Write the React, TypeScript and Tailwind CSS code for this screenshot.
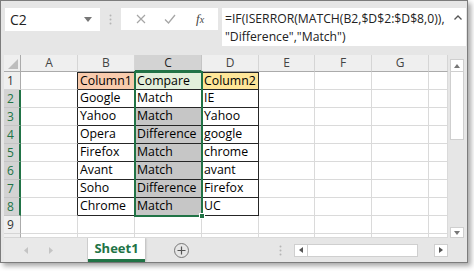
import React from 'react';

const cols = ['A', 'B', 'C', 'D', 'E', 'F', 'G', ''];

const data: string[][] = [
    ['Column1', 'Compare', 'Column2'],
    ['Google', 'Match', 'IE'],
    ['Yahoo', 'Match', 'Yahoo'],
    ['Opera', 'Difference', 'google'],
    ['Firefox', 'Match', 'chrome'],
    ['Avant', 'Match', 'avant'],
    ['Soho', 'Difference', 'Firefox'],
    ['Chrome', 'Match', 'UC'],
];

const cellFont = { fontFamily: '"Open Sans", "Noto Sans", sans-serif' };

function HeaderCell({ label, selected }: { label: string; selected?: boolean }) {
    return (
        <div
            className={
                selected
                    ? 'flex items-center justify-center bg-[#d3d3d3] border-r border-r-[#c4c4c4] border-b-2 border-b-[#217346] text-[12px] text-[#222]'
                    : 'flex items-center justify-center bg-[#efefef] border-r border-r-[#d5d5d5] border-b border-b-[#ababab] text-[12px] text-[#444]'
            }
        >
            {label}
        </div>
    );
}

function RowHeader({ n, selected }: { n: number | string; selected?: boolean }) {
    return (
        <div
            className={
                selected
                    ? 'flex items-center pl-[3px] bg-[#d3d3d3] border-r-2 border-r-[#217346] border-b border-b-[#c4c4c4] text-[12px] text-[#217346]'
                    : 'flex items-center pl-[3px] bg-[#efefef] border-r border-r-[#ababab] border-b border-b-[#d5d5d5] text-[12px] text-[#333]'
            }
        >
            {n}
        </div>
    );
}

function Cell({ text, className }: { text?: string; className: string }) {
    return (
        <div className={'flex items-center pl-[2px] overflow-hidden whitespace-nowrap text-[12.3px] text-black ' + className}>
            {text}
        </div>
    );
}

function cellClass(r: number, c: number) {
    // r: 0-based data row (row 1 = 0), c: 0 = A ... 7 = H
    const inTable = r <= 7 && c >= 1 && c <= 3;
    let cls = inTable ? 'border-r border-b border-[#262626] ' : 'border-r border-b border-[#dadada] ';
    if (c === 0 && r <= 7) cls = 'border-r border-r-[#262626] border-b border-b-[#dadada] ';
    if (r === 0 && c === 1) cls += 'bg-[#f8cbad] border-t border-t-[#262626] ';
    else if (r === 0 && c === 2) cls += 'bg-[#e2efda] border-t border-t-[#262626] ';
    else if (r === 0 && c === 3) cls += 'bg-[#ffe699] border-t border-t-[#262626] ';
    else if (c === 2 && r >= 2 && r <= 7) cls += 'bg-[#c6c6c6] ';
    else cls += 'bg-white ';
    return cls;
}

export default function App() {
    return (
        <div className="w-[474px] h-[271px] bg-white" style={cellFont}>
            <div className="w-[468px] h-[263px] border border-[#7c7c7c] bg-[#e6e6e6] shadow-[3px_3px_5px_rgba(0,0,0,0.35)] flex flex-col">
                {/* Formula bar */}
                <div className="h-[54px] pt-[7px] flex items-start shrink-0">
                    <div className="ml-[4px] w-[95px] h-[23px] bg-white flex items-center justify-between pl-[5px] pr-[8px]">
                        <span className="text-[14px] text-[#222]">C2</span>
                        <svg width="8" height="5" viewBox="0 0 8 5">
                            <path d="M0 0 L8 0 L4 5 Z" fill="#777" />
                        </svg>
                    </div>
                    <div className="w-[21px] h-[23px] flex items-center justify-center">
                        <svg width="3" height="11" viewBox="0 0 3 11">
                            <circle cx="1.5" cy="1.5" r="1" fill="#b5b5b5" />
                            <circle cx="1.5" cy="5.5" r="1" fill="#b5b5b5" />
                            <circle cx="1.5" cy="9.5" r="1" fill="#b5b5b5" />
                        </svg>
                    </div>
                    <div className="w-[97px] h-[22px] bg-white flex items-center">
                        <svg className="ml-[15px]" width="10" height="10" viewBox="0 0 10 10">
                            <path d="M1 1 L9 9 M9 1 L1 9" stroke="#a6a6a6" strokeWidth="1.2" />
                        </svg>
                        <svg className="ml-[18px]" width="12" height="10" viewBox="0 0 12 10">
                            <path d="M1 5.5 L4.5 9 L11 1" stroke="#a6a6a6" strokeWidth="1.3" fill="none" />
                        </svg>
                        <span
                            className="ml-[20px] text-[13px] italic text-[#444]"
                            style={{ fontFamily: '"Liberation Serif", serif' }}
                        >
                            f<span className="text-[10px]">x</span>
                        </span>
                    </div>
                    <div className="ml-[4px] w-[244px] h-[38px] bg-white relative pl-[3px] pt-[2px] text-[12.2px] leading-[18px] text-[#222] whitespace-nowrap">
                        <div>=IF(ISERROR(MATCH(B2,$D$2:$D$8,0)),</div>
                        <div>"Difference","Match")</div>
                        <svg className="absolute right-[4px] top-[7px]" width="8" height="5" viewBox="0 0 8 5">
                            <path d="M0.5 4.5 L4 1 L7.5 4.5" stroke="#555" strokeWidth="1.3" fill="none" />
                        </svg>
                    </div>
                </div>

                {/* Sheet */}
                <div className="h-[183px] flex shrink-0">
                    <div className="ml-[3px] relative grid grid-cols-[17px_57px_57px_67px_57px_56px_57px_57px_19px] grid-rows-[17px_repeat(9,18px)_4px]">
                        <div className="bg-[#efefef] border-r border-r-[#ababab] border-b border-b-[#ababab] relative">
                            <svg className="absolute right-[2px] bottom-[2px]" width="10" height="10" viewBox="0 0 10 10">
                                <path d="M10 0 L10 10 L0 10 Z" fill="#bdbdbd" />
                            </svg>
                        </div>
                        {cols.map((c, i) => (
                            <HeaderCell key={'h' + i} label={c} selected={c === 'C'} />
                        ))}
                        {Array.from({ length: 10 }).map((_, r) => (
                            <React.Fragment key={'r' + r}>
                                <RowHeader n={r < 9 ? r + 1 : ''} selected={r >= 1 && r <= 7} />
                                {cols.map((_, c) => (
                                    <Cell
                                        key={'c' + r + '-' + c}
                                        text={r <= 7 && c >= 1 && c <= 3 ? data[r][c - 1] : undefined}
                                        className={cellClass(r, c)}
                                    />
                                ))}
                            </React.Fragment>
                        ))}
                        {/* selection */}
                        <div className="absolute left-[130px] top-[16px] w-[69px] h-[146px] border-2 border-[#217346] pointer-events-none" />
                        <div className="absolute left-[195px] top-[158px] w-[6px] h-[6px] bg-[#217346] border border-white" />
                    </div>
                    {/* vertical scrollbar */}
                    <div className="w-[17px] flex flex-col items-center pt-[4px]">
                        <div className="w-[14px] h-[13px] bg-white border border-[#cfcfcf] flex items-center justify-center">
                            <svg width="6" height="4" viewBox="0 0 6 4">
                                <path d="M0 4 L3 0 L6 4 Z" fill="#777" />
                            </svg>
                        </div>
                        <div className="w-[14px] h-[68px] bg-white border border-[#cfcfcf] border-t-0" />
                        <div className="flex-1" />
                        <div className="w-[14px] h-[11px] bg-white border border-[#cfcfcf] flex items-center justify-center">
                            <svg width="6" height="4" viewBox="0 0 6 4">
                                <path d="M0 0 L6 0 L3 4 Z" fill="#777" />
                            </svg>
                        </div>
                    </div>
                </div>

                {/* Tab bar */}
                <div className="h-[24px] flex items-stretch shrink-0">
                    <div className="ml-[3px] w-[84px] bg-[#e9e9e9] border-r border-[#d0d0d0] flex items-center pl-[20px] gap-[21px]">
                        <svg width="4" height="7" viewBox="0 0 4 7">
                            <path d="M4 0 L0 3.5 L4 7 Z" fill="#c4c4c4" />
                        </svg>
                        <svg width="4" height="7" viewBox="0 0 4 7">
                            <path d="M0 0 L4 3.5 L0 7 Z" fill="#c4c4c4" />
                        </svg>
                    </div>
                    <div className="w-[57px] bg-white border-b-[3px] border-[#217346] flex items-center justify-center text-[13px] font-bold text-[#217346] shadow-[1px_0_2px_rgba(0,0,0,0.2)]">
                        Sheet1
                    </div>
                    <div className="ml-[29px] flex items-center">
                        <div className="w-[15px] h-[15px] rounded-full border border-[#777] flex items-center justify-center">
                            <svg width="9" height="9" viewBox="0 0 9 9">
                                <path d="M4.5 0.5 V8.5 M0.5 4.5 H8.5" stroke="#555" strokeWidth="1.2" />
                            </svg>
                        </div>
                    </div>
                    <div className="ml-[90px] flex items-center">
                        <svg width="3" height="11" viewBox="0 0 3 11">
                            <circle cx="1.5" cy="1.5" r="1" fill="#b5b5b5" />
                            <circle cx="1.5" cy="5.5" r="1" fill="#b5b5b5" />
                            <circle cx="1.5" cy="9.5" r="1" fill="#b5b5b5" />
                        </svg>
                    </div>
                    <div className="ml-[12px] flex items-center">
                        <div className="w-[14px] h-[13px] bg-white border border-[#cfcfcf] flex items-center justify-center">
                            <svg width="4" height="6" viewBox="0 0 4 6">
                                <path d="M4 0 L0 3 L4 6 Z" fill="#555" />
                            </svg>
                        </div>
                        <div className="w-[110px] h-[13px] bg-white border border-[#cfcfcf] border-l-0" />
                        <div className="w-[16px] h-[13px]" />
                        <div className="w-[14px] h-[13px] bg-white border border-[#cfcfcf] flex items-center justify-center">
                            <svg width="4" height="6" viewBox="0 0 4 6">
                                <path d="M0 0 L4 3 L0 6 Z" fill="#555" />
                            </svg>
                        </div>
                    </div>
                </div>
            </div>
        </div>
    );
}
